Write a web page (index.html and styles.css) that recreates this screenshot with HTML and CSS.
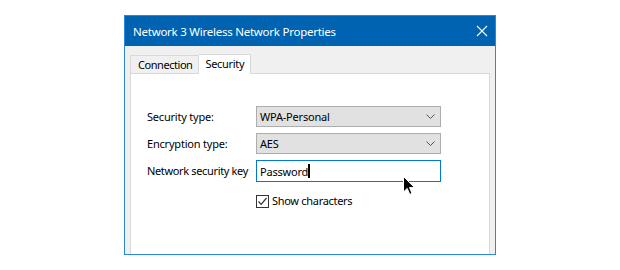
FILE: index.html
```html
<!DOCTYPE html>
<html>
<head>
<meta charset="utf-8">
<link rel="stylesheet" href="styles.css">
</head>
<body>
<div class="window">
  <div class="titlebar">
    <span class="title">Network 3 Wireless Network Properties</span>
    <svg class="close" width="12" height="12" viewBox="0 0 12 12"><path d="M1 1 L11 11 M11 1 L1 11" stroke="#fff" stroke-width="1.1" fill="none"/></svg>
  </div>
  <div class="content">
    <div class="tabs">
      <div class="tab">Connection</div>
      <div class="tab active">Security</div>
    </div>
    <div class="panel">
      <div class="form">
        <div class="label">Security type:</div>
        <div class="select"><span>WPA-Personal</span><svg class="chev" width="9" height="5" viewBox="0 0 9 5"><path d="M0.5 0.5 L4.5 4.5 L8.5 0.5" stroke="#555" fill="none" stroke-width="1"/></svg></div>
        <div class="label">Encryption type:</div>
        <div class="select"><span>AES</span><svg class="chev" width="9" height="5" viewBox="0 0 9 5"><path d="M0.5 0.5 L4.5 4.5 L8.5 0.5" stroke="#555" fill="none" stroke-width="1"/></svg></div>
        <div class="label">Network security key</div>
        <div class="input"><span>Password</span><span class="caret"></span></div>
        <div></div>
        <div class="check"><span class="box"><svg width="11" height="11" viewBox="0 0 11 11"><path d="M1.5 5.5 L4.2 8.3 L9.5 2" stroke="#333" fill="none" stroke-width="1.2"/></svg></span><span>Show characters</span></div>
      </div>
      <svg class="cursor" width="13" height="20" viewBox="0 0 13 20"><path d="M0.5 0.5 L0.5 16 L4.2 12.4 L6.8 18.4 L9 17.4 L6.5 11.6 L11.5 11.6 Z" fill="#000" stroke="#fff" stroke-width="1"/></svg>
    </div>
  </div>
</div>
</body>
</html>
```
FILE: styles.css
```css
html, body {
  margin: 0;
  padding: 0;
  background: #fff;
}
body {
  padding: 15px 0 0 124px;
  font-family: "Noto Sans", "Liberation Sans", sans-serif;
  font-size: 11px;
  letter-spacing: -0.2px;
  color: #000;
}
.window {
  width: 370px;
  height: 238px;
  border: 1px solid #2b88d8;
  background: #f0f0f0;
  display: flex;
  flex-direction: column;
  overflow: hidden;
}
.titlebar {
  height: 30px;
  background: #0063b1;
  display: flex;
  align-items: center;
  justify-content: space-between;
  padding: 0 7px 0 8px;
  margin-top: -1px;
  border-top: 1px solid #0063b1;
}
.title {
  color: #fff;
  font-size: 11.5px;
  letter-spacing: -0.25px;
}
.close {
  display: block;
  margin-top: -1px;
}
.content {
  flex: 1;
  padding: 7px 5px 0 5px;
  display: flex;
  flex-direction: column;
}
.tabs {
  display: flex;
  align-items: flex-end;
  height: 20px;
  position: relative;
  z-index: 1;
}
.tab {
  height: 17px;
  padding: 0 6px 0 7px;
  border: 1px solid #d9d9d9;
  border-bottom: none;
  background: #f0f0f0;
  display: flex;
  align-items: center;
  letter-spacing: -0.45px;
}
.tab.active {
  height: 20px;
  background: #fff;
  border-left: none;
  padding: 1px 6px 0 6px;
  align-items: flex-start;
  box-sizing: border-box;
  margin-bottom: -1px;
  letter-spacing: -0.3px;
}
.panel {
  flex: 1;
  background: #fff;
  border: 1px solid #d9d9d9;
  border-bottom: none;
  position: relative;
}
.form {
  display: grid;
  grid-template-columns: 109px 185px;
  row-gap: 6px;
  align-items: center;
  padding: 32px 0 0 16px;
}
.label {
  line-height: 16px;
  white-space: nowrap;
}
.label:nth-child(5) {
  letter-spacing: -0.35px;
}
.select {
  height: 19px;
  border: 1px solid #adadad;
  background: #e1e1e1;
  display: flex;
  align-items: center;
  justify-content: space-between;
  padding: 0 4px 0 3px;
}
.chev {
  display: block;
  margin-right: 1px;
}
.input {
  height: 20px;
  border: 1px solid #0078d7;
  background: #fff;
  display: flex;
  align-items: center;
  padding: 0 3px;
}
.caret {
  display: inline-block;
  width: 1.5px;
  height: 14px;
  background: #000;
}
.check {
  display: flex;
  align-items: center;
  margin-top: 6px;
  line-height: 14px;
  letter-spacing: -0.3px;
}
.box {
  width: 11px;
  height: 11px;
  border: 1px solid #333;
  background: #fff;
  display: flex;
  margin-right: 3px;
}
.box svg {
  display: block;
}
.cursor {
  position: absolute;
  left: 272px;
  top: 102px;
}
```
